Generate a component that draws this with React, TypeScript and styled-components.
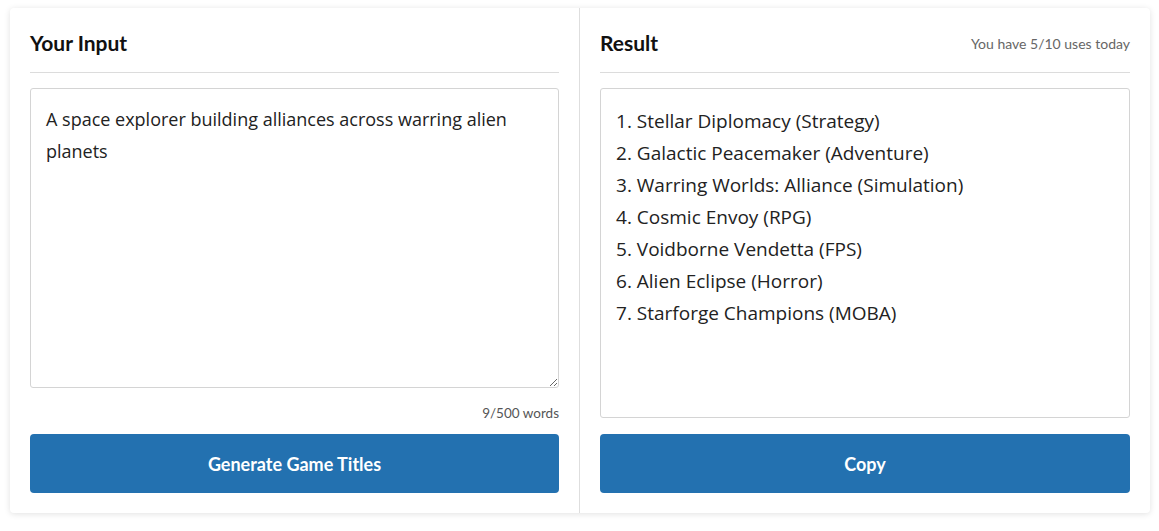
import React, { useState } from 'react'
import styled, { createGlobalStyle } from 'styled-components'

const GlobalStyle = createGlobalStyle`
  body {
    margin: 0;
    background: #fff;
    font-family: Lato, "Liberation Sans", sans-serif;
    color: #222;
  }
`

const Page = styled.div`
  padding: 8px 9px 18px 10px;
`

const Card = styled.div`
  display: grid;
  grid-template-columns: 1fr 1fr;
  background: #fff;
  border-radius: 4px;
  box-shadow: 0 1px 6px rgba(0, 0, 0, 0.12);
`

const Column = styled.section<{ $divider?: boolean }>`
  display: flex;
  flex-direction: column;
  padding: 20px;
  border-right: ${(p) => (p.$divider ? '1px solid #dedede' : 'none')};
`

const Header = styled.div`
  display: flex;
  align-items: center;
  justify-content: space-between;
  height: 30px;
  padding-bottom: 14px;
  border-bottom: 1px solid #dcdcdc;
  margin-bottom: 15px;
`

const Title = styled.h2`
  margin: 0;
  font-size: 21px;
  font-weight: 700;
  color: #111;
  position: relative;
  top: -1px;
`

const Usage = styled.span`
  font-size: 14px;
  color: #666;
`

const Input = styled.textarea`
  box-sizing: border-box;
  height: 300px;
  padding: 14px 15px;
  border: 1px solid #d4d4d4;
  border-radius: 3px;
  font-family: "Open Sans", "Liberation Sans", sans-serif;
  font-size: 18px;
  line-height: 32px;
  color: #222;
  resize: vertical;
  outline: none;
`

const Counter = styled.div`
  text-align: right;
  font-size: 13.5px;
  color: #555;
  padding: 17px 0 12px;
  line-height: 17px;
`

const Output = styled.ol`
  box-sizing: border-box;
  height: 330px;
  margin: 0 0 16px;
  padding: 16px 15px;
  list-style: none;
  border: 1px solid #d4d4d4;
  border-radius: 3px;
  font-family: "Open Sans", "Liberation Sans", sans-serif;
  font-size: 19px;
  line-height: 32px;
  color: #222;
`

const Button = styled.button`
  height: 59px;
  border: none;
  border-radius: 4px;
  background: #2371b0;
  color: #fff;
  font-family: Lato, "Liberation Sans", sans-serif;
  font-size: 18px;
  font-weight: 700;
  cursor: pointer;
`

const titles = [
  'Stellar Diplomacy (Strategy)',
  'Galactic Peacemaker (Adventure)',
  'Warring Worlds: Alliance (Simulation)',
  'Cosmic Envoy (RPG)',
  'Voidborne Vendetta (FPS)',
  'Alien Eclipse (Horror)',
  'Starforge Champions (MOBA)',
]

const App = () => {
  const [text, setText] = useState('A space explorer building alliances across warring alien planets')
  const words = text.trim() ? text.trim().split(/\s+/).length : 0

  return (
    <Page>
      <GlobalStyle />
      <Card>
        <Column $divider>
          <Header>
            <Title>Your Input</Title>
          </Header>
          <Input value={text} onChange={(e) => setText(e.target.value)} />
          <Counter>{words}/500 words</Counter>
          <Button>Generate Game Titles</Button>
        </Column>
        <Column>
          <Header>
            <Title>Result</Title>
            <Usage>You have 5/10 uses today</Usage>
          </Header>
          <Output>
            {titles.map((t, i) => (
              <li key={t}>{i + 1}. {t}</li>
            ))}
          </Output>
          <Button>Copy</Button>
        </Column>
      </Card>
    </Page>
  )
}

export default App
